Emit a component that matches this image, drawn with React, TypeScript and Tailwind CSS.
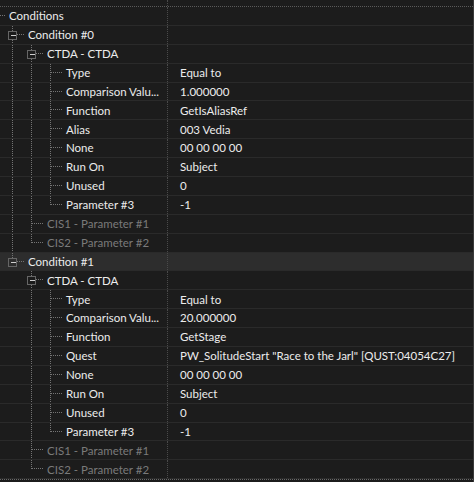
import React from 'react';

type Row = {
  level: number;
  label: string;
  value?: string;
  open?: boolean;
  dim?: boolean;
  selected?: boolean;
  // vertical guides for ancestor columns 0..level-1
  guides: boolean[];
  last: boolean;
};

const ROWS: Row[] = [
  { level: 0, label: 'Conditions', guides: [], last: true, open: false },
  { level: 1, label: 'Condition #0', guides: [false], last: false, open: true },
  { level: 2, label: 'CTDA - CTDA', guides: [false, true], last: false, open: true },
  { level: 3, label: 'Type', value: 'Equal to', guides: [false, true, true], last: false },
  { level: 3, label: 'Comparison Valu...', value: '1.000000', guides: [false, true, true], last: false },
  { level: 3, label: 'Function', value: 'GetIsAliasRef', guides: [false, true, true], last: false },
  { level: 3, label: 'Alias', value: '003 Vedia', guides: [false, true, true], last: false },
  { level: 3, label: 'None', value: '00 00 00 00', guides: [false, true, true], last: false },
  { level: 3, label: 'Run On', value: 'Subject', guides: [false, true, true], last: false },
  { level: 3, label: 'Unused', value: '0', guides: [false, true, true], last: false },
  { level: 3, label: 'Parameter #3', value: '-1', guides: [false, true, true], last: true },
  { level: 2, label: 'CIS1 - Parameter #1', dim: true, guides: [false, true], last: false },
  { level: 2, label: 'CIS2 - Parameter #2', dim: true, guides: [false, true], last: true },
  { level: 1, label: 'Condition #1', guides: [false], last: true, open: true, selected: true },
  { level: 2, label: 'CTDA - CTDA', guides: [false, false], last: false, open: true },
  { level: 3, label: 'Type', value: 'Equal to', guides: [false, false, true], last: false },
  { level: 3, label: 'Comparison Valu...', value: '20.000000', guides: [false, false, true], last: false },
  { level: 3, label: 'Function', value: 'GetStage', guides: [false, false, true], last: false },
  { level: 3, label: 'Quest', value: 'PW_SolitudeStart "Race to the Jarl" [QUST:04054C27]', guides: [false, false, true], last: false },
  { level: 3, label: 'None', value: '00 00 00 00', guides: [false, false, true], last: false },
  { level: 3, label: 'Run On', value: 'Subject', guides: [false, false, true], last: false },
  { level: 3, label: 'Unused', value: '0', guides: [false, false, true], last: false },
  { level: 3, label: 'Parameter #3', value: '-1', guides: [false, false, true], last: true },
  { level: 2, label: 'CIS1 - Parameter #1', dim: true, guides: [false, false], last: false },
  { level: 2, label: 'CIS2 - Parameter #2', dim: true, guides: [false, false], last: true },
];

const LINE = '#747474';

function Guides({ row, bg }: { row: Row; bg: string }) {
  const w = (row.level + 1) * 19 + 3;
  const cx = (k: number) => 19 * k + 9.5;
  const own = cx(row.level);
  return (
    <svg width={w} height="100%" className="-ml-[16px] shrink-0" shapeRendering="crispEdges">
      {row.guides.map((on, k) =>
        on ? (
          <line key={k} x1={cx(k)} x2={cx(k)} y1="0" y2="100%" stroke={LINE} strokeDasharray="1 1" />
        ) : null,
      )}
      <line x1={own} x2={own} y1="0" y2={row.last ? '50%' : '100%'} stroke={LINE} strokeDasharray="1 1" />
      <line x1={own} x2={w} y1="50%" y2="50%" stroke={LINE} strokeDasharray="1 1" />
      {row.open && (
        <g>
          <rect x={own - 4} y="5.5" width="8" height="8" fill={bg} stroke="#666666" />
          <line x1={own - 2} x2={own + 3} y1="9.5" y2="9.5" stroke="#cfcfcf" />
        </g>
      )}
    </svg>
  );
}

function TreeRow({ row }: { row: Row }) {
  const bg = row.selected ? '#2d2d2d' : '#1c1c1c';
  return (
    <div
      className={`flex h-[18.9px] border-b border-[#2a2a2a] ${row.selected ? 'bg-[#2d2d2d]' : 'bg-[#1c1c1c]'}`}
    >
      <div className="flex w-[168px] shrink-0 items-center overflow-hidden border-r border-dotted border-[#4a4a4a]">
        <Guides row={row} bg={bg} />
        <span
          className={`ml-[3px] whitespace-nowrap leading-none ${row.dim ? 'text-[#7a7a7a]' : 'text-[#ececec]'}`}
        >
          {row.label}
        </span>
      </div>
      <div className="flex min-w-0 flex-1 items-center pl-[12px]">
        <span className="whitespace-nowrap leading-none text-[#ececec]">{row.value}</span>
      </div>
    </div>
  );
}

export default function App() {
  return (
    <div
      className="h-[482px] w-[474px] overflow-hidden bg-[#1c1c1c] text-[11.5px] border-r border-[#3a3a3a]"
      style={{ fontFamily: 'Lato, "Noto Sans", sans-serif' }}
    >
      <div className="flex h-[7px] border-b border-dotted border-[#5a5a5a]">
        <div className="w-[168px] border-r border-dotted border-[#4a4a4a]" />
      </div>
      {ROWS.map((row, i) => (
        <TreeRow key={i} row={row} />
      ))}
      <div className="border-t border-dotted border-[#6a6a6a]" />
    </div>
  );
}
